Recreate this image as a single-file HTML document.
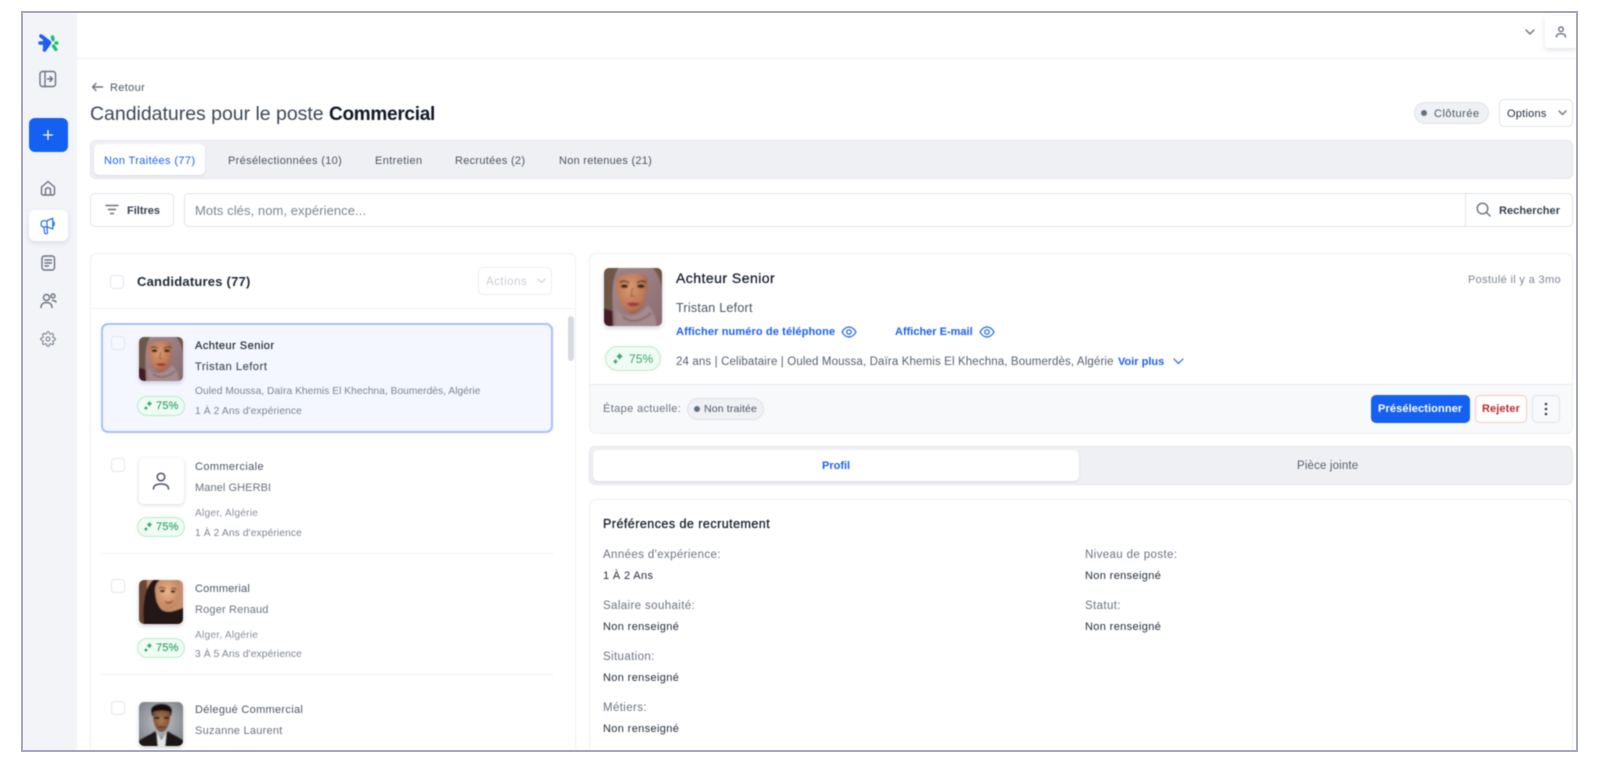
<!DOCTYPE html>
<html lang="fr"><head><meta charset="utf-8"><title>Candidatures</title>
<style>
html,body{margin:0;padding:0;background:#fff}
body{width:1600px;height:763px;overflow:hidden;position:relative;font-family:"Liberation Sans",sans-serif;color:#374151}
#f{position:absolute;left:21px;top:11px;width:1553px;height:737px;border:2px solid #a6a6bf;overflow:hidden;background:#fff}
#w{position:absolute;left:-23px;top:-13px;width:1600px;height:763px;filter:blur(.4px)}
.a{position:absolute;box-sizing:border-box}
.t{position:absolute;white-space:nowrap;line-height:16px;height:16px;margin-top:1px}
svg{position:absolute;overflow:visible}
.cb{position:absolute;width:14px;height:14px;border:1.5px solid #e4e6ee;border-radius:3.5px;background:#fff;box-sizing:border-box}
.bd{position:absolute;width:48px;height:20px;border:1px solid #b5ecc8;border-radius:10px;background:#effbf3;box-sizing:border-box}
.ph{position:absolute;width:44px;height:44px;border-radius:5px;overflow:hidden;box-shadow:0 2px 5px rgba(40,50,80,.22)}
.ph svg{position:static;display:block}
.i{stroke:#6b7280;fill:none;stroke-width:1.4;stroke-linecap:round;stroke-linejoin:round}
.s11{font-size:11px}.s12{font-size:12px}.g{color:#6b7280}.lg{color:#878d9a}
.pc{font-size:11px;color:#3aa76d;letter-spacing:.2px;-webkit-text-stroke:.2px #3aa76d}
.lb{font-size:11.5px;color:#6b7280;letter-spacing:.38px}
.vl{font-size:11px;color:#1f2937;letter-spacing:.36px}
.sm{font-size:10.200px;letter-spacing:.14px;color:#7d8492}
</style></head><body>
<svg width="0" height="0" style="position:absolute"><defs>
<symbol id="spark" viewBox="0 0 12 12"><path d="M7 1l1.200 1.800L10 4 8.200 5.200 7 7 5.800 5.200 4 4l1.800-1.200zM3.200 6.500l.9 1.400 1.400.9-1.400.9-.9 1.400-.9-1.400-1.400-.9 1.400-.9z" fill="#3aa76d"/></symbol>
<filter id="b1" x="-20%" y="-20%" width="140%" height="140%"><feGaussianBlur stdDeviation=".6"/></filter>
<radialGradient id="sk1" cx=".45" cy=".4" r=".65"><stop offset="0" stop-color="#d9986f"/><stop offset=".7" stop-color="#bd7855"/><stop offset="1" stop-color="#8d5a44"/></radialGradient>
<radialGradient id="sk2" cx=".5" cy=".4" r=".65"><stop offset="0" stop-color="#eab48c"/><stop offset="1" stop-color="#bc7d58"/></radialGradient>
<radialGradient id="sk3" cx=".5" cy=".45" r=".6"><stop offset="0" stop-color="#ad7a52"/><stop offset="1" stop-color="#754a30"/></radialGradient>
<linearGradient id="hj" x1="0" y1="0" x2="1" y2="1"><stop offset="0" stop-color="#a88b8e"/><stop offset="1" stop-color="#866a6d"/></linearGradient>
<radialGradient id="bg3" cx=".5" cy=".45" r=".7"><stop offset="0" stop-color="#c0c2c8"/><stop offset="1" stop-color="#74767f"/></radialGradient>
<symbol id="p1" viewBox="0 0 44 44"><g filter="url(#b1)"><rect x="-2" y="-2" width="48" height="48" fill="#6f5647"/><path d="M-2 30L8 33 8 46-2 46z" fill="#431b24"/><path d="M7 46C7 30 4 8 12-1H36C46 8 46 30 46 46z" fill="url(#hj)"/><path d="M9 10C9 3 15 2 21 2 28 2 33 5 33 12 33 22 30 32 22 35 14 33 9 22 9 10z" fill="url(#sk1)"/><path d="M8 6C14-1 28-2 34 7 28 3 16 3 8 9z" fill="#9c7f82"/><path d="M12 11C14 9.500 17 9.500 19 11.500M25 11.500C27 9.500 30 9.500 32 11" stroke="#2d1c18" stroke-width="1" fill="none"/><ellipse cx="15.500" cy="13.800" rx="2.800" ry="1.400" fill="#2b1c18"/><ellipse cx="28" cy="13.800" rx="2.900" ry="1.400" fill="#2b1c18"/><path d="M21.500 15L20.500 21.500 23.500 21.500" stroke="#8f5238" stroke-width=".8" fill="none"/><path d="M17 27C20 25.800 24 25.800 27.500 27 24 30 20 30 17 27z" fill="#a03a3b"/><path d="M9 31C15 39 26 38 33 28 36 31 40 36 40 46H9z" fill="#a58b8e"/><path d="M14 37C20 42 28 41 36 34" stroke="#7f6568" stroke-width="1.200" fill="none"/></g></symbol>
<symbol id="p2" viewBox="0 0 44 44"><g filter="url(#b1)"><rect x="-2" y="-2" width="48" height="48" fill="#c4906f"/><path d="M-2-2H8V46H-2z" fill="#6d4436"/><path d="M5 46C3 28 5 4 17-2H22C14 8 15 22 23 30 30 34 38 30 46 27V46z" fill="#221513"/><path d="M21 0H39C41 6 41 14 39 20 37 27 31 31 26 29 20 26 16 17 16 10 16 5 18 2 21 0z" fill="url(#sk2)"/><path d="M20 8.500C22 7 25 7 26.500 9M32 9C34 7.500 36 8 37.500 9.500" stroke="#3a2620" stroke-width=".9" fill="none"/><ellipse cx="23.500" cy="11" rx="2.500" ry="1.200" fill="#33201b"/><ellipse cx="34" cy="11.500" rx="2.300" ry="1.200" fill="#33201b"/><path d="M25 20.500C28 22.500 32 22 35 19.500 33 25 27 25.500 25 20.500z" fill="#a9524a"/></g></symbol>
<symbol id="p3" viewBox="0 0 44 44"><g filter="url(#b1)"><rect x="-2" y="-2" width="48" height="48" fill="url(#bg3)"/><path d="M12 9C11 0 33-1 33 9L32 14H13z" fill="#120d0c"/><path d="M14 10C18 8 27 8 31 10 32 20 28 30 22.500 30 17 30 13 20 14 10z" fill="url(#sk3)"/><rect x="15.500" y="15" width="5" height="1.800" fill="#20140f"/><rect x="25" y="15" width="5" height="1.800" fill="#20140f"/><path d="M19 25H26" stroke="#5a3325" stroke-width="1.300"/><path d="M-2 46V40C4 35 11 33 16 29L22.500 37 29 29C34 33 41 35 46 40V46z" fill="#1f1917"/><path d="M17.500 30L22.500 38 27.500 30 26 46H19z" fill="#e4e5e8"/></g></symbol>
</defs></svg>
<div id="f"><div id="w">

<!-- sidebar -->
<div class="a" style="left:23px;top:13px;width:54px;height:740px;background:#f3f4f8"></div>
<div class="a" style="left:77px;top:58px;width:1500px;height:1px;background:#f0f1f4"></div>
<svg style="left:36px;top:31px" width="24" height="24" viewBox="36 31 24 24">
<g stroke="#1d5ff0" stroke-width="3.600" stroke-linecap="round" fill="none"><path d="M41 36L49 42"/><path d="M40 43H49"/><path d="M44.500 50L49.500 43"/></g>
<path d="M43 36L50 43 43 49.500z" fill="#1d5ff0"/>
<g stroke="#15c26b" stroke-width="3.400" stroke-linecap="round" fill="none"><path d="M52.500 37L53 39.500"/><path d="M56 43H56.800"/><path d="M53.500 46L55.800 49.500"/></g></svg>
<svg style="left:39px;top:70px" width="18" height="18" viewBox="0 0 18 18"><rect x="1" y="1.500" width="15.500" height="15" rx="2.500" class="i"/><path d="M6 1.500V16.500M8.500 9H13M11 6.500L13.500 9 11 11.500" class="i"/></svg>
<div class="a" style="left:29px;top:118px;width:39px;height:34px;background:#1460f0;border-radius:6px"></div>
<svg style="left:42px;top:129px" width="12" height="12" viewBox="0 0 12 12"><path d="M6 1.500V10.500M1.500 6H10.500" stroke="#fff" stroke-width="1.300" stroke-linecap="round"/></svg>
<svg style="left:40px;top:180px" width="16" height="16" viewBox="0 0 16 16"><path d="M1.500 7L8 1.500 14.500 7V13.500A1.500 1.500 0 0 1 13 15H3A1.500 1.500 0 0 1 1.500 13.500zM5.500 15V9.500A1.500 1.500 0 0 1 7 8H9A1.500 1.500 0 0 1 10.500 9.500V15" class="i"/></svg>
<div class="a" style="left:29px;top:210px;width:39px;height:31px;background:#fff;border-radius:6px;box-shadow:0 2px 6px rgba(60,70,110,.14)"></div>
<svg style="left:40px;top:217px" width="17" height="18" viewBox="0 0 17 18"><path d="M1.200 6C1.200 4.500 2.200 3.800 3.500 3.800H7L12.800 1.200V12L7 9.800H3.500C2.200 9.800 1.200 9 1.200 7.500zM3.800 9.800L4.600 15.800C4.700 16.400 5.200 16.700 5.800 16.700H6.600C7.200 16.700 7.600 16.200 7.500 15.600L6.900 9.800M7 3.800V9.800M12.800 4.600A2.200 2.200 0 0 1 12.800 8.800" fill="none" stroke="#2068f2" stroke-width="1.200" stroke-linejoin="round" stroke-linecap="round"/></svg>
<svg style="left:41px;top:255px" width="15" height="16" viewBox="0 0 15 16"><rect x="1" y="1" width="12.500" height="14" rx="2.500" class="i"/><path d="M4 5H10.500M4 8H10.500M4 11H7.500" class="i"/></svg>
<svg style="left:40px;top:293px" width="17" height="16" viewBox="0 0 17 16"><circle cx="6.500" cy="4.500" r="3" class="i"/><path d="M1 14.500C1 11 3.500 9.500 6.500 9.500S12 11 12 14.500" class="i"/><path d="M11 3A2 2 0 0 1 15 3C15 4 14 5 13 5 12 5 11 4 11 3zM12.500 7.500C14 7.500 15.500 8 16 9" class="i" stroke-width="1.100"/></svg>
<svg style="left:40px;top:331px" width="16" height="16" viewBox="0 0 24 24"><circle cx="12" cy="12" r="3" class="i" stroke-width="2"/><path d="M19.400 15a1.650 1.650 0 0 0 .33 1.820l.06.06a2 2 0 1 1-2.830 2.830l-.06-.06a1.650 1.650 0 0 0-2.800 1.170V21a2 2 0 0 1-4 0v-.09A1.650 1.650 0 0 0 7.200 19.700l-.06.06a2 2 0 1 1-2.830-2.830l.06-.06A1.650 1.650 0 0 0 3.200 14H3a2 2 0 0 1 0-4h.09A1.650 1.650 0 0 0 4.600 7.200l-.06-.06a2 2 0 1 1 2.830-2.830l.06.06A1.650 1.650 0 0 0 10 3.200V3a2 2 0 0 1 4 0v.09a1.650 1.650 0 0 0 2.800 1.170l.06-.06a2 2 0 1 1 2.830 2.830l-.06.06A1.650 1.650 0 0 0 20.800 10H21a2 2 0 0 1 0 4h-.09a1.650 1.650 0 0 0-1.510 1z" class="i" stroke-width="2"/></svg>

<!-- top bar -->
<svg style="left:1525px;top:29px" width="10" height="6" viewBox="0 0 10 6"><path d="M1 1L5 5 9 1" class="i" stroke-width="1.100"/></svg>
<div class="a" style="left:1545px;top:16px;width:32px;height:32px;background:#fff;border-radius:3px;box-shadow:0 2px 6px rgba(60,70,110,.16)"></div>
<svg style="left:1555px;top:26px" width="12" height="12" viewBox="0 0 12 12"><circle cx="6" cy="3.300" r="2.300" class="i" stroke="#4b5563" stroke-width="1"/><path d="M1.500 11C1.500 8.500 3.500 7.700 6 7.700S10.500 8.500 10.500 11" class="i" stroke-width="1"/></svg>

<!-- header -->
<svg style="left:91px;top:82px" width="13" height="10" viewBox="0 0 13 10"><path d="M11.500 5H1.500M5 1.500L1.500 5 5 8.500" class="i" stroke="#4b5563" stroke-width="1.100"/></svg>
<div class="t s11" style="left:110px;top:78.500px;color:#4b5563;letter-spacing:.35px">Retour</div>
<div class="t" style="left:90px;top:104.500px;font-size:19.500px;color:#3d4757;letter-spacing:-.02px">Candidatures pour le poste <b style="color:#111827;font-weight:700;letter-spacing:-.28px;font-size:19px">Commercial</b></div>
<div class="a" style="left:1414px;top:102px;width:75px;height:22px;background:#f0f1f5;border:1px solid #dfe1e8;border-radius:11px"></div>
<div class="a" style="left:1421px;top:110px;width:6px;height:6px;border-radius:50%;background:#667085"></div>
<div class="t s11" style="left:1434px;top:105px;color:#4b5563;letter-spacing:.5px">Clôturée</div>
<div class="a" style="left:1499px;top:99px;width:74px;height:28px;background:#fff;border:1px solid #e1e3ea;border-radius:5px"></div>
<div class="t s11" style="left:1507px;top:105px;color:#1f2937;letter-spacing:.25px">Options</div>
<svg style="left:1558px;top:110px" width="9" height="6" viewBox="0 0 9 6"><path d="M1 1L4.500 4.500 8 1" class="i" stroke="#374151" stroke-width="1.200"/></svg>

<!-- tabs -->
<div class="a" style="left:90px;top:140px;width:1483px;height:39px;background:#eff0f4;border:1px solid #e5e7ed;border-radius:6px"></div>
<div class="a" style="left:94px;top:144px;width:111px;height:31px;background:#fff;border-radius:5px;box-shadow:0 1px 2px rgba(50,60,90,.12)"></div>
<div class="t s11" style="left:104px;top:152px;color:#1b62ee;letter-spacing:.38px">Non Traitées (77)</div>
<div class="t s11" style="left:228px;top:152px;color:#4b5563;letter-spacing:.34px">Présélectionnées (10)</div>
<div class="t s11" style="left:375px;top:152px;color:#4b5563;letter-spacing:.38px">Entretien</div>
<div class="t s11" style="left:455px;top:152px;color:#4b5563;letter-spacing:.28px">Recrutées (2)</div>
<div class="t s11" style="left:559px;top:152px;color:#4b5563;letter-spacing:.26px">Non retenues (21)</div>

<!-- filter & search -->
<div class="a" style="left:90px;top:193px;width:84px;height:34px;background:#fff;border:1px solid #e1e3ea;border-radius:5px"></div>
<svg style="left:105px;top:204px" width="14" height="11" viewBox="0 0 14 11"><path d="M1 1.500H13M3.500 5.500H10.500M5.500 9.500H8.500" class="i" stroke="#4b5563" stroke-width="1.300"/></svg>
<div class="t s11" style="left:127px;top:202px;color:#374151;font-weight:700">Filtres</div>
<div class="a" style="left:184px;top:193px;width:1389px;height:34px;background:#fff;border:1px solid #e1e3ea;border-radius:5px"></div>
<div class="a" style="left:1465px;top:193px;width:1px;height:34px;background:#e1e3ea"></div>
<div class="t" style="left:195px;top:201.500px;font-size:13px;color:#7d8492;letter-spacing:.07px">Mots clés, nom, expérience...</div>
<svg style="left:1476px;top:202px" width="15" height="15" viewBox="0 0 15 15"><circle cx="6.500" cy="6.500" r="5.300" class="i" stroke="#374151" stroke-width="1.300"/><path d="M10.500 10.500L14 14" class="i" stroke="#374151" stroke-width="1.300"/></svg>
<div class="t s11" style="left:1499px;top:202px;color:#374151;font-weight:700;letter-spacing:.05px">Rechercher</div>

<!-- list card -->
<div class="a" style="left:90px;top:253px;width:486px;height:520px;background:#fff;border:1px solid #eff0f4;border-radius:7px"></div>
<div class="a" style="left:91px;top:308px;width:484px;height:1px;background:#f0f1f4"></div>
<div class="cb" style="left:110px;top:275px"></div>
<div class="t" style="left:137px;top:273px;font-size:13px;font-weight:700;color:#1f2937;letter-spacing:.22px">Candidatures (77)</div>
<div class="a" style="left:478px;top:267px;width:74px;height:28px;border:1px solid #eceef2;border-radius:5px;background:#fff"></div>
<div class="t" style="left:486px;top:273px;font-size:11.500px;color:#c9cdd6;letter-spacing:.5px">Actions</div>
<svg style="left:537px;top:278px" width="9" height="6" viewBox="0 0 9 6"><path d="M1 1L4.500 4.500 8 1" fill="none" stroke="#c9cdd6" stroke-width="1.100" stroke-linecap="round"/></svg>
<div class="a" style="left:568px;top:316px;width:6px;height:45px;background:#d9dbe3;border-radius:3px"></div>

<!-- item 1 -->
<div class="a" style="left:101px;top:323px;width:452px;height:110px;background:#f4f7ff;border:2px solid #a8c0f8;border-radius:7px"></div>
<div class="cb" style="left:111px;top:336px;background:#f6f8ff"></div>
<div class="ph" style="left:139px;top:337px"><svg width="44" height="44"><use href="#p1"/></svg></div>
<div class="t s11" style="left:195px;top:336.500px;color:#1f2937;letter-spacing:.48px;-webkit-text-stroke:.2px #1f2937">Achteur Senior</div>
<div class="t s11" style="left:195px;top:357.500px;color:#4b5563;letter-spacing:.58px;-webkit-text-stroke:.2px #4b5563">Tristan Lefort</div>
<div class="t sm" style="left:195px;top:383px;letter-spacing:.05px">Ouled Moussa, Daïra Khemis El Khechna, Boumerdès, Algérie</div>
<div class="t sm" style="left:195px;top:402.500px">1 À 2 Ans d'expérience</div>
<div class="bd" style="left:137px;top:396px"></div><svg style="left:143px;top:400px" width="11" height="11"><use href="#spark"/></svg>
<div class="t pc" style="left:156px;top:397px">75%</div>

<!-- item 2 -->
<div class="cb" style="left:111px;top:458px"></div>
<div class="a" style="left:139px;top:458px;width:45px;height:46px;background:#fff;border-radius:5px;box-shadow:0 1px 4px rgba(40,50,80,.18)"></div>
<svg style="left:151px;top:471px" width="20" height="20" viewBox="0 0 20 20"><circle cx="10" cy="6" r="3.800" fill="none" stroke="#4b5563" stroke-width="1.500"/><path d="M2.500 18C2.500 14.500 5.500 13 10 13S17.500 14.500 17.500 18" fill="none" stroke="#4b5563" stroke-width="1.500" stroke-linecap="round"/></svg>
<div class="t s11" style="left:195px;top:458px;color:#4b5563;letter-spacing:.38px">Commerciale</div>
<div class="t s11" style="left:195px;top:479px;color:#6b7280;letter-spacing:.08px">Manel GHERBI</div>
<div class="t sm" style="left:195px;top:504.500px;color:#8b919e;letter-spacing:.22px">Alger, Algérie</div>
<div class="t sm" style="left:195px;top:524.500px">1 À 2 Ans d'expérience</div>
<div class="bd" style="left:137px;top:517px"></div><svg style="left:143px;top:521px" width="11" height="11"><use href="#spark"/></svg>
<div class="t pc" style="left:156px;top:518px">75%</div>
<div class="a" style="left:101px;top:553px;width:452px;height:1px;background:#f0f1f4"></div>

<!-- item 3 -->
<div class="cb" style="left:111px;top:579px"></div>
<div class="ph" style="left:139px;top:580px"><svg width="44" height="44"><use href="#p2"/></svg></div>
<div class="t s11" style="left:195px;top:579.500px;color:#4b5563;letter-spacing:.2px">Commerial</div>
<div class="t s11" style="left:195px;top:601px;color:#6b7280;letter-spacing:.17px">Roger Renaud</div>
<div class="t sm" style="left:195px;top:626.500px;color:#8b919e;letter-spacing:.22px">Alger, Algérie</div>
<div class="t sm" style="left:195px;top:646px">3 À 5 Ans d'expérience</div>
<div class="bd" style="left:137px;top:638px"></div><svg style="left:143px;top:642px" width="11" height="11"><use href="#spark"/></svg>
<div class="t pc" style="left:156px;top:639px">75%</div>
<div class="a" style="left:101px;top:674px;width:452px;height:1px;background:#f0f1f4"></div>

<!-- item 4 -->
<div class="cb" style="left:111px;top:701px"></div>
<div class="ph" style="left:139px;top:702px"><svg width="44" height="44"><use href="#p3"/></svg></div>
<div class="t s11" style="left:195px;top:701px;color:#4b5563;letter-spacing:.3px">Délegué Commercial</div>
<div class="t s11" style="left:195px;top:722px;color:#6b7280;letter-spacing:.25px">Suzanne Laurent</div>
<div class="t sm" style="left:195px;top:747px;color:#8b919e">Alger, Algérie</div>

<!-- detail card -->
<div class="a" style="left:589px;top:253px;width:984px;height:181px;background:#fff;border:1px solid #eceef2;border-radius:7px;overflow:hidden"><div class="a" style="left:0;top:130px;width:984px;height:51px;background:#f8f9fb;border-top:1px solid #e9ebf0"></div></div>
<div class="ph" style="left:604px;top:268px;width:58px;height:58px"><svg width="58" height="58"><use href="#p1"/></svg></div>
<div class="t" style="left:676px;top:269px;font-size:14px;color:#111827;-webkit-text-stroke:.25px #111827;letter-spacing:.47px">Achteur Senior</div>
<div class="t" style="left:676px;top:299px;font-size:12.500px;color:#4b5563;letter-spacing:.25px">Tristan Lefort</div>
<div class="t" style="left:676px;top:323px;font-size:11px;font-weight:700;color:#1b62ee;letter-spacing:.12px">Afficher numéro de téléphone</div>
<svg style="left:841px;top:326px" width="16" height="12" viewBox="0 0 16 12"><path d="M1 6C3 2.500 5.300 1 8 1S13 2.500 15 6C13 9.500 10.700 11 8 11S3 9.500 1 6z" fill="none" stroke="#1b62ee" stroke-width="1.200"/><circle cx="8" cy="6" r="2.200" fill="none" stroke="#1b62ee" stroke-width="1.200"/></svg>
<div class="t" style="left:895px;top:323px;font-size:11px;font-weight:700;color:#1b62ee;letter-spacing:0">Afficher E-mail</div>
<svg style="left:979px;top:326px" width="16" height="12" viewBox="0 0 16 12"><path d="M1 6C3 2.500 5.300 1 8 1S13 2.500 15 6C13 9.500 10.700 11 8 11S3 9.500 1 6z" fill="none" stroke="#1b62ee" stroke-width="1.200"/><circle cx="8" cy="6" r="2.200" fill="none" stroke="#1b62ee" stroke-width="1.200"/></svg>
<div class="bd" style="left:605px;top:346px;width:56px;height:25px;border-radius:13px"></div><svg style="left:612px;top:352px" width="13" height="13"><use href="#spark"/></svg>
<div class="t" style="left:629px;top:350px;font-size:12px;color:#3aa76d;letter-spacing:.1px">75%</div>
<div class="t" style="left:676px;top:353px;font-size:11.500px;color:#566070;letter-spacing:.13px">24 ans | Celibataire | Ouled Moussa, Daïra Khemis El Khechna, Boumerdès, Algérie</div>
<div class="t" style="left:1118px;top:353px;font-size:11px;font-weight:700;color:#1b62ee">Voir plus</div>
<svg style="left:1173px;top:358px" width="11" height="7" viewBox="0 0 11 7"><path d="M1 1L5.500 5.500 10 1" fill="none" stroke="#1b62ee" stroke-width="1.200" stroke-linecap="round"/></svg>
<div class="t s11" style="left:1468px;top:271px;color:#7d8492;letter-spacing:.34px">Postulé il y a 3mo</div>
<div class="t s11" style="left:603px;top:400px;color:#6b7280;letter-spacing:.36px">Étape actuelle:</div>
<div class="a" style="left:687px;top:398px;width:77px;height:22px;background:#f0f1f5;border:1px solid #dfe1e8;border-radius:11px"></div>
<div class="a" style="left:694px;top:406px;width:6px;height:6px;border-radius:50%;background:#667085"></div>
<div class="t" style="left:704px;top:400px;font-size:10.500px;color:#4b5563;letter-spacing:.15px">Non traitée</div>
<div class="a" style="left:1371px;top:395px;width:99px;height:28px;background:#1460f0;border-radius:5px"></div>
<div class="t s11" style="left:1378px;top:400px;color:#fff;font-weight:700;letter-spacing:.12px">Présélectionner</div>
<div class="a" style="left:1475px;top:395px;width:52px;height:28px;background:#fff;border:1px solid #f9c4c0;border-radius:5px"></div>
<div class="t s11" style="left:1482px;top:400px;color:#b4322b;font-weight:700;letter-spacing:.1px">Rejeter</div>
<div class="a" style="left:1532px;top:395px;width:28px;height:28px;background:#f8f9fb;border:1px solid #dfe1e8;border-radius:5px"></div>
<svg style="left:1544px;top:402px" width="4" height="14" viewBox="0 0 4 14"><circle cx="2" cy="2" r="1.300" fill="#374151"/><circle cx="2" cy="7" r="1.300" fill="#374151"/><circle cx="2" cy="12" r="1.300" fill="#374151"/></svg>

<!-- profile tabs -->
<div class="a" style="left:589px;top:446px;width:984px;height:39px;background:#eff0f4;border:1px solid #e5e7ed;border-radius:6px"></div>
<div class="a" style="left:593px;top:450px;width:486px;height:31px;background:#fff;border-radius:5px;box-shadow:0 1px 2px rgba(50,60,90,.12)"></div>
<div class="t s11" style="left:822px;top:457px;color:#1b62ee;font-weight:700">Profil</div>
<div class="t" style="left:1297px;top:457px;font-size:11.500px;color:#566070;letter-spacing:.15px">Pièce jointe</div>

<!-- preferences -->
<div class="a" style="left:589px;top:499px;width:984px;height:280px;background:#fff;border:1px solid #eceef2;border-radius:7px"></div>
<div class="t" style="left:603px;top:514.500px;font-size:12.500px;color:#111827;-webkit-text-stroke:.25px #111827;letter-spacing:.47px">Préférences de recrutement</div>
<div class="t lb" style="left:603px;top:545.500px">Années d'expérience:</div>
<div class="t vl" style="left:603px;top:567px">1 À 2 Ans</div>
<div class="t lb" style="left:603px;top:596.500px">Salaire souhaité:</div>
<div class="t vl" style="left:603px;top:618px">Non renseigné</div>
<div class="t lb" style="left:603px;top:647.500px">Situation:</div>
<div class="t vl" style="left:603px;top:669px">Non renseigné</div>
<div class="t lb" style="left:603px;top:698.500px">Métiers:</div>
<div class="t vl" style="left:603px;top:720px">Non renseigné</div>
<div class="t lb" style="left:1085px;top:545.500px">Niveau de poste:</div>
<div class="t vl" style="left:1085px;top:567px">Non renseigné</div>
<div class="t lb" style="left:1085px;top:596.500px">Statut:</div>
<div class="t vl" style="left:1085px;top:618px">Non renseigné</div>

</div></div>
</body></html>
